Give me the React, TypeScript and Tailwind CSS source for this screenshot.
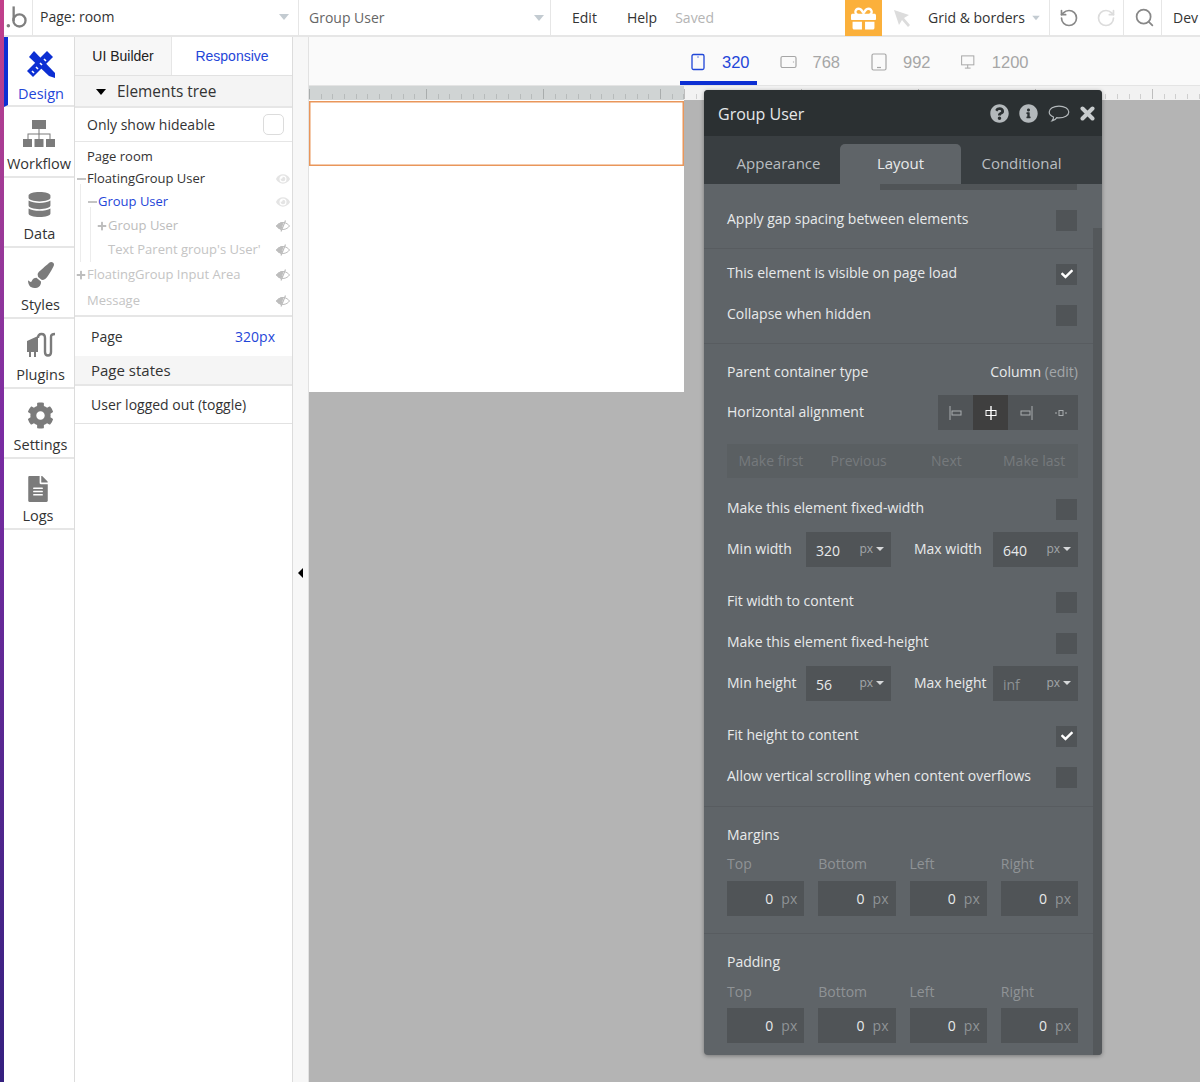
import { ReactNode } from "react";
import {
  FaCheck,
  FaCog,
  FaDatabase,
  FaEye,
  FaFileAlt,
  FaGift,
  FaInfoCircle,
  FaPaintBrush,
  FaPlus,
  FaQuestionCircle,
} from "react-icons/fa";
import { RotateCcw, RotateCw, Search } from "lucide-react";

const Caret = ({ className = "" }: { className?: string }) => (
  <span className={`block w-0 h-0 border-x-[5px] border-x-transparent border-t-[6px] border-t-[#c3cbd1] ${className}`} />
);

const Logo = () => (
  <svg width="29" height="34" viewBox="4 0 29 34" fill="none" stroke="#7f7f7f">
    <circle cx="8.5" cy="25" r="1.8" fill="#7f7f7f" stroke="none" />
    <path d="M14 5 V20" strokeWidth="2.4" />
    <circle cx="20" cy="19.5" r="6.3" strokeWidth="2.4" />
  </svg>
);

const DesignIcon = () => (
  <svg width="30" height="28" viewBox="0 0 30 28" fill="#0c2fd3">
    <path d="M3 7 L8 1 L29 23 L29 28 L23 26 Z" />
    <path d="M1 21 L21 1 L27 7 L7 27 Z" />
    <path d="M6 21 l2 2 M10 17 l2 2 M14 13 l2 2 M18 9 l2 2" stroke="#fff" strokeWidth="1.6" />
  </svg>
);

const WorkflowIcon = () => (
  <svg width="32" height="28" viewBox="0 0 32 28" fill="#7b7b7b">
    <rect x="9" y="0" width="14" height="9" />
    <rect x="0" y="19" width="9" height="8" />
    <rect x="11.5" y="19" width="9" height="8" />
    <rect x="23" y="19" width="9" height="8" />
    <path d="M15.5 9h1v4.5h11v5.5h-1v-4.5h-10v4.5h-1v-4.5h-10v4.5h-1v-5.5h11z" />
  </svg>
);

const PluginIcon = () => (
  <svg width="30" height="26" viewBox="0 0 30 26" fill="#7b7b7b">
    <path d="M1 9 L12 4 V20 H10 V25 H8 V20 H5 V25 H3 V20 H1 Z" />
    <path d="M12 6 q0 -4 3.5 -4 q3.5 0 3.5 4 V20 q0 3.5 3 3.5 q3 0 3 -3.5 V5 q0 -3 4 -3" fill="none" stroke="#7b7b7b" strokeWidth="2.4" />
  </svg>
);

const EyeOff = () => (
  <svg width="14" height="12" viewBox="0 0 14 12" fill="none" stroke="#bdbdbd" strokeWidth="1">
    <path d="M7 2.5 C10 2.5 12.5 4.5 13.5 6 C12.5 7.5 10 9.5 7 9.5 C4 9.5 1.5 7.5 0.5 6 C1.5 4.5 4 2.5 7 2.5 Z" />
    <path d="M7 2.5 C4 2.5 1.5 4.5 0.5 6 C1.5 7.5 3 8.7 5 9.2 Z" fill="#bdbdbd" />
    <path d="M9.5 0.5 L5 11.5" strokeWidth="1.2" />
  </svg>
);

const CommentIcon = () => (
  <svg width="22" height="17" viewBox="0 0 22 17" fill="none" stroke="#b4b9bc" strokeWidth="1.2">
    <path d="M11 1.2 C16.4 1.2 20.8 3.6 20.8 7 C20.8 10.4 16.4 12.8 11 12.8 C10.2 12.8 9.5 12.7 8.8 12.6 C7.8 14.4 6 15.6 4 15.8 C5 14.8 5.6 13.4 5.5 12 C2.9 11 1.2 9.2 1.2 7 C1.2 3.6 5.6 1.2 11 1.2 Z" />
  </svg>
);

const CloseIcon = () => (
  <svg width="15" height="15" viewBox="0 0 15 15" stroke="#c8ccce" strokeWidth="4" strokeLinecap="round">
    <path d="M2.5 2.5 L12.5 12.5 M12.5 2.5 L2.5 12.5" />
  </svg>
);

const AlignIcon = ({ kind }: { kind: number }) => (
  <svg width="18" height="16" viewBox="0 0 18 16" fill="none" stroke="currentColor" strokeWidth="1">
    {kind === 0 && (
      <>
        <path d="M3 1v14" />
        <rect x="5" y="6" width="9" height="4" />
      </>
    )}
    {kind === 1 && (
      <>
        <path d="M9 1v14" strokeWidth="1.4" />
        <rect x="4" y="5.5" width="10" height="5" />
      </>
    )}
    {kind === 2 && (
      <>
        <path d="M15 1v14" />
        <rect x="4" y="6" width="9" height="4" />
      </>
    )}
    {kind === 3 && (
      <>
        <rect x="7" y="5.5" width="4" height="5" />
        <path d="M3 8h2M13 8h2" />
      </>
    )}
  </svg>
);

const railItems: { label: string; icon: ReactNode; active?: boolean; shift?: string }[] = [
  { label: "Design", icon: <DesignIcon />, active: true },
  { label: "Workflow", icon: <WorkflowIcon /> },
  { label: "Data", icon: <FaDatabase size={25} color="#7b7b7b" />, shift: "pl-[1px]" },
  { label: "Styles", icon: <FaPaintBrush size={26} color="#7b7b7b" />, shift: "pl-[3px]" },
  { label: "Plugins", icon: <PluginIcon />, shift: "pl-[3px]" },
  { label: "Settings", icon: <FaCog size={27} color="#7b7b7b" />, shift: "pl-[3px]" },
  { label: "Logs", icon: <FaFileAlt size={26} color="#7b7b7b" className="mt-[6px]" />, shift: "pr-[2px]" },
];

function Rail() {
  return (
    <div className="w-[71px] shrink-0 flex flex-col border-r border-[#dcdcdc] bg-white">
      {railItems.map((item) => (
        <div
          key={item.label}
          className={`h-[70.4px] flex flex-col items-center justify-end border-b-2 border-[#e6e6e6] ${item.shift ?? ""} ${
            item.active ? "border-l-4 border-l-[#0c2fd3] text-[#1f46d8] pb-[1px]" : "text-[#333] pb-[2px]"
          }`}
        >
          <div className="h-[34px] flex items-center justify-center">{item.icon}</div>
          <div className="text-[14.5px] leading-[20px] mt-[3px]">{item.label}</div>
        </div>
      ))}
    </div>
  );
}

const TreeRow = ({
  label,
  indent,
  sign,
  color,
  eye,
  rowClass,
}: {
  label: string;
  indent: number;
  sign?: "minus" | "plus";
  color: string;
  eye?: "open" | "off";
  rowClass: string;
}) => (
  <div className={`flex items-center ${rowClass}`}>
    <div className="flex items-center shrink-0" style={{ paddingLeft: indent }}>
      <span className="w-[11px] flex justify-center pr-[1px]">
        {sign === "minus" && <span className="block w-[9px] h-[2px] bg-[#c4c4c4]" />}
        {sign === "plus" && <FaPlus size={10} color="#bdbdbd" />}
      </span>
      <span className={`text-[13px] whitespace-nowrap ${color}`}>{label}</span>
    </div>
    <span className="ml-auto mr-[2px] flex items-center">
      {eye === "open" && <FaEye size={14} color="#e4e4e4" />}
      {eye === "off" && <EyeOff />}
    </span>
  </div>
);

function TreePanel() {
  return (
    <div className="w-[218px] shrink-0 flex flex-col bg-white border-r border-[#dcdcdc]">
      <div className="h-[39px] flex border-b border-[#e2e2e2] font-['Liberation_Sans',sans-serif] text-[14px]">
        <div className="w-[97px] flex items-center justify-center bg-[#f7f7f7] border-r border-[#e6e6e6] text-[#222]">UI Builder</div>
        <div className="flex-1 flex items-center justify-center text-[#1f46d8]">Responsive</div>
      </div>
      <div className="h-[32px] flex items-center bg-[#f4f4f4] border-b-2 border-[#e6e6e6] pl-[21px] pt-[1px] text-[#333] text-[15.4px]">
        <span className="w-0 h-0 border-x-[5px] border-x-transparent border-t-[6px] border-t-black mr-[11px]" />
        Elements tree
      </div>
      <div className="h-[34px] flex items-center justify-between border-b border-[#e6e6e6] pl-[12px] pr-[8px] text-[14px] text-[#333]">
        <span>Only show hideable</span>
        <span className="w-[21px] h-[21px] rounded-[5px] border border-[#dcdcdc]" />
      </div>
      <div className="relative h-[175px] flex flex-col border-b-2 border-[#e6e6e6] pt-[3px]">
        <span className="absolute left-[5px] top-[42px] h-[78px] w-px bg-[#ececec]" />
        <span className="absolute left-[15px] top-[65px] h-[55px] w-px bg-[#ececec]" />
        <div className="h-[23px] flex items-center pl-[12px] text-[13px] text-[#333]">Page room</div>
        <TreeRow rowClass="h-[22px]" label="FloatingGroup User" indent={1} sign="minus" color="text-[#333]" eye="open" />
        <TreeRow rowClass="h-[24px]" label="Group User" indent={12} sign="minus" color="text-[#1f46d8]" eye="open" />
        <TreeRow rowClass="h-[24px]" label="Group User" indent={22} sign="plus" color="text-[#bcbcbc]" eye="off" />
        <TreeRow rowClass="h-[24px]" label="Text Parent group's User'" indent={22} color="text-[#c4c4c4]" eye="off" />
        <TreeRow rowClass="h-[26px]" label="FloatingGroup Input Area" indent={1} sign="plus" color="text-[#c4c4c4]" eye="off" />
        <TreeRow rowClass="h-[25px]" label="Message" indent={1} color="text-[#c4c4c4]" eye="off" />
      </div>
      <div className="h-[39px] flex items-center justify-between pl-[16px] pr-[17px] text-[14px] text-[#333]">
        Page
        <span className="text-[#1f46d8]">320px</span>
      </div>
      <div className="h-[30px] flex items-center bg-[#f5f5f5] border-b-2 border-[#e6e6e6] pl-[16px] pt-[1px] text-[15px] text-[#333]">Page states</div>
      <div className="h-[38px] flex items-center border-b border-[#e2e2e2] pl-[16px] text-[14px] text-[#333]">User logged out (toggle)</div>
    </div>
  );
}

const PhoneIcon = () => (
  <svg width="20" height="18" viewBox="0 0 20 18" fill="none" stroke="currentColor" strokeWidth="1.3">
    <rect x="4" y="1.5" width="12" height="15" rx="1.5" />
    <path d="M10 3.6v0.8" />
  </svg>
);

const TabletWideIcon = () => (
  <svg width="20" height="18" viewBox="0 0 20 18" fill="none" stroke="currentColor" strokeWidth="1.2">
    <rect x="2" y="3.5" width="15" height="11" rx="1.5" />
    <path d="M14.5 8.5v1" />
  </svg>
);

const TabletIcon = () => (
  <svg width="20" height="18" viewBox="0 0 20 18" fill="none" stroke="currentColor" strokeWidth="1.2">
    <rect x="3" y="1" width="14" height="16" rx="1.5" />
    <path d="M8 14.5h4" />
  </svg>
);

const MonitorIcon = () => (
  <svg width="20" height="18" viewBox="0 0 20 18" fill="none" stroke="currentColor" strokeWidth="1.2">
    <rect x="2" y="1.5" width="15" height="11" />
    <path d="M9.5 12.5v4M6 16.5h7" />
  </svg>
);

const breakpoints = [
  { value: "320", icon: <PhoneIcon />, tab: "gap-[14px] text-[#1f46d8] border-b-[4px] border-[#0c2fd3]" },
  { value: "768", icon: <TabletWideIcon />, tab: "gap-[14px] text-[#a6a6a6] pb-[4px]" },
  { value: "992", icon: <TabletIcon />, tab: "gap-[14px] text-[#a6a6a6] pb-[4px]" },
  { value: "1200", icon: <MonitorIcon />, tab: "gap-[16px] text-[#a6a6a6] pb-[4px]" },
];

function Canvas() {
  return (
    <div className="flex-1 flex flex-col min-w-0">
      <div className="h-[49px] shrink-0 flex items-stretch gap-[13.5px] bg-[#fafafa] border-b border-[#e4e4e4] pl-[371px] font-['Liberation_Sans',sans-serif] text-[16.5px]">
        {breakpoints.map((b) => (
          <div key={b.value} className={`w-[77px] pl-[8px] pt-[6px] flex items-center ${b.tab}`}>
            {b.icon}
            {b.value}
          </div>
        ))}
      </div>
      <div className="h-[14px] shrink-0 flex bg-[#f2f2f2]">
        <div className="w-[375px] bg-[#d0d4d4] bg-[image:repeating-linear-gradient(90deg,#a9adad_0,#a9adad_1px,transparent_1px,transparent_117px),repeating-linear-gradient(90deg,#b7bbbb_0,#b7bbbb_1px,transparent_1px,transparent_11.7px)] bg-[length:100%_10px,100%_5px] bg-[position:0_3px,0_8px] bg-no-repeat" />
        <div className="flex-1 bg-[image:repeating-linear-gradient(90deg,#bdbdbd_0,#bdbdbd_1px,transparent_1px,transparent_117px),repeating-linear-gradient(90deg,#cfcfcf_0,#cfcfcf_1px,transparent_1px,transparent_11.7px)] bg-[length:100%_10px,100%_5px] bg-[position:0_3px,0_8px] bg-no-repeat" />
      </div>
      <div className="flex-1 bg-[#b4b4b4]">
        <div className="w-[375px] h-[292px] bg-white pt-px">
          <div className="h-[65px] w-[375px] shadow-[inset_0_0_0_1.5px_#e9965a]" />
        </div>
      </div>
    </div>
  );
}

const Check = ({ on }: { on?: boolean }) => (
  <span className="w-[21px] h-[21px] bg-[#505457] flex items-center justify-center">
    {on && <FaCheck size={12} color="#fff" />}
  </span>
);

const CheckRow = ({ label, on, className = "" }: { label: string; on?: boolean; className?: string }) => (
  <div className={`h-[32px] flex items-center justify-between ${className}`}>
    <span className="text-[#e8eaeb] pb-[3px]">{label}</span>
    <Check on={on} />
  </div>
);

const SizeBox = ({ value, dim }: { value: string; dim?: boolean }) => (
  <div className={`w-[85px] h-[35px] bg-[#505457] flex items-center pl-[10px] pr-[7px] ${dim ? "text-[#8d9194]" : "text-[#e8eaeb]"}`}>
    <span className="pt-[1px]">{value}</span>
    <span className="ml-auto pb-[2px] text-[12px] text-[#a3a7aa]">px</span>
    <span className="ml-[3px] mb-[2px] w-0 h-0 border-x-[4px] border-x-transparent border-t-[4px] border-t-[#d6d8da]" />
  </div>
);

const SizeRow = ({ a, b, av, bv, dim, className = "" }: { a: string; b: string; av: string; bv: string; dim?: boolean; className?: string }) => (
  <div className={`h-[35px] flex items-center ${className}`}>
    <span className="w-[79px] pb-[2px] text-[#e8eaeb]">{a}</span>
    <SizeBox value={av} />
    <span className="ml-[23px] w-[79px] pb-[2px] text-[#e8eaeb]">{b}</span>
    <SizeBox value={bv} dim={dim} />
  </div>
);

const BoxGroup = ({ title, labelGap }: { title: string; labelGap: string }) => (
  <div>
    <div className="h-[20px] leading-[20px] text-[#e8eaeb]">{title}</div>
    <div className="grid grid-cols-4 gap-x-[14px]">
      {["Top", "Bottom", "Left", "Right"].map((side) => (
        <div key={side} className="flex flex-col">
          <div className={`h-[20px] leading-[20px] text-[#8f9396] ${labelGap}`}>{side}</div>
          <div className="h-[35px] mt-auto bg-[#505457] flex items-center justify-end pr-[7px] gap-[8px]">
            <span className="text-[#e8eaeb]">0</span>
            <span className="text-[#8f9396]">px</span>
          </div>
        </div>
      ))}
    </div>
  </div>
);

function PropertyPanel() {
  return (
    <div className="absolute left-[704px] top-[90px] w-[398px] h-[965px] rounded-[4px] overflow-hidden bg-[#5f6468] shadow-[0_1px_4px_rgba(0,0,0,0.35)] flex flex-col text-[14px]">
      <div className="h-[46px] shrink-0 bg-[#2b3032] flex items-center pl-[14px] pr-[7px] pt-[1px] text-[#e6e8e9] text-[16px]">
        Group User
        <div className="ml-auto flex items-center gap-[10px] text-[#b4b9bc]">
          <FaQuestionCircle size={19} />
          <FaInfoCircle size={19} />
          <CommentIcon />
          <CloseIcon />
        </div>
      </div>
      <div className="h-[48px] shrink-0 bg-[#393e41] flex items-end text-[15px] text-[#b9bdc0]">
        <div className="w-[136px] h-[40px] flex items-center justify-center pl-[13px] pb-[2px]">Appearance</div>
        <div className="w-[121px] h-[40px] rounded-t-[5px] bg-[#5f6468] flex items-center justify-center pb-[2px] text-[#e8eaeb]">Layout</div>
        <div className="flex-1 h-[40px] flex items-center justify-center pr-[20px] pb-[2px]">Conditional</div>
      </div>
      <div className="relative flex-1 flex flex-col">
        <span className="absolute left-[176px] top-0 w-[197px] h-[6px] bg-[#505457]" />
        <span className="absolute right-0 top-[44px] bottom-0 w-[9px] bg-[#54585b]" />

        <div className="h-[65px] shrink-0 pt-[20px] pl-[23px] pr-[25px] border-b border-[#585c60]">
          <CheckRow label="Apply gap spacing between elements" />
        </div>
        <div className="h-[95px] shrink-0 pt-[9px] pl-[23px] pr-[25px] border-b border-[#585c60]">
          <CheckRow label="This element is visible on page load" on />
          <CheckRow label="Collapse when hidden" className="mt-[9px]" />
        </div>
        <div className="h-[463px] shrink-0 pt-[14px] pl-[23px] pr-[24px] border-b border-[#585c60]">
          <div className="h-[28px] flex items-center justify-between pb-[2px] text-[#e8eaeb]">
            Parent container type
            <span>
              Column <span className="text-[#a3a7aa]">(edit)</span>
            </span>
          </div>
          <div className="h-[35px] mt-[9px] flex items-center justify-between text-[#e8eaeb]">
            <span className="pb-[2px]">Horizontal alignment</span>
            <div className="flex bg-[#505457] text-[#a9adb0]">
              {[0, 1, 2, 3].map((kind) => (
                <span key={kind} className={`w-[35px] h-[35px] flex items-center justify-center ${kind === 1 ? "bg-[#3f3f3f] text-white" : ""}`}>
                  <AlignIcon kind={kind} />
                </span>
              ))}
            </div>
          </div>
          <div className="h-[34px] mt-[14px] pb-[2px] bg-[#5a5f62] grid grid-cols-4 items-center text-center text-[#767a7d]">
            <span>Make first</span>
            <span>Previous</span>
            <span>Next</span>
            <span>Make last</span>
          </div>
          <CheckRow label="Make this element fixed-width" className="mt-[15px] pr-px" />
          <SizeRow a="Min width" b="Max width" av="320" bv="640" className="mt-[7px]" />
          <CheckRow label="Fit width to content" className="mt-[19px] pr-px" />
          <CheckRow label="Make this element fixed-height" className="mt-[9px] pr-px" />
          <SizeRow a="Min height" b="Max height" av="56" bv="inf" dim className="mt-[7px]" />
          <CheckRow label="Fit height to content" on className="mt-[19px] pr-px" />
          <CheckRow label="Allow vertical scrolling when content overflows" className="mt-[9px] pr-px" />
        </div>
        <div className="h-[127px] shrink-0 pt-[18px] pl-[23px] pr-[24px] border-b border-[#585c60]">
          <BoxGroup title="Margins" labelGap="mt-[9px] mb-[7px]" />
        </div>
        <div className="flex-1 pt-[18px] pl-[23px] pr-[24px]">
          <BoxGroup title="Padding" labelGap="mt-[10px] mb-[6px]" />
        </div>
      </div>
    </div>
  );
}

function TopBar() {
  return (
    <div className="h-[37px] shrink-0 flex items-stretch bg-white border-b-2 border-[#e6e6e6] text-[14px] text-[#333]">
      <div className="w-[29px] flex items-center justify-center border-r border-[#e6e6e6]">
        <Logo />
      </div>
      <div className="w-[266px] flex items-center justify-between pl-[7px] pr-[9px] pb-[2px] border-r border-[#e6e6e6]">
        Page: room
        <Caret />
      </div>
      <div className="w-[252px] flex items-center justify-between pl-[10px] pr-[6px] border-r border-[#e6e6e6] text-[#666]">
        Group User
        <Caret />
      </div>
      <div className="w-[294px] flex items-center pl-[21px] pb-[1px]">
        Edit
        <span className="ml-[30px]">Help</span>
        <span className="ml-[18px] text-[#b4b4b4]">Saved</span>
      </div>
      <div className="w-[37px] h-[36px] bg-[#fbb03b] flex items-center justify-center">
        <FaGift size={25} color="#fff" />
      </div>
      <div className="w-[168px] flex items-center pl-[11px] border-r border-[#e6e6e6]">
        <svg width="18" height="18" viewBox="0 0 18 18" fill="#dcdcdc">
          <path d="M1 1 L16 6 L11 9 L17 16 L15 18 L9 11 L6 16 Z" />
        </svg>
        <span className="ml-[17px]">Grid &amp; borders</span>
        <Caret className="ml-[6px] scale-75" />
      </div>
      <div className="w-[74px] flex items-center pl-[9px] gap-[17px] border-r border-[#e6e6e6]">
        <RotateCcw size={20} color="#888" />
        <RotateCw size={20} color="#dcdcdc" />
      </div>
      <div className="w-[38px] flex items-center justify-center pl-[3px] border-r border-[#e6e6e6]">
        <Search size={21} color="#888" />
      </div>
      <div className="pl-[11px] flex items-center whitespace-nowrap">Dev</div>
    </div>
  );
}

export default function App() {
  return (
    <div className="relative w-[1200px] h-[1082px] overflow-hidden bg-white flex font-['Open_Sans',sans-serif]">
      <div className="w-[4px] shrink-0 bg-gradient-to-b from-[#c2408a] via-[#7a2ba2] via-40% to-[#35207f]" />
      <div className="flex-1 flex flex-col min-w-0">
        <TopBar />
        <div className="flex-1 flex min-h-0">
          <Rail />
          <TreePanel />
          <div className="w-[16px] shrink-0 bg-[#f7f7f7] border-r border-[#e2e2e2] flex items-center justify-center">
            <span className="w-0 h-0 border-y-[5px] border-y-transparent border-r-[5px] border-r-black mt-[26px]" />
          </div>
          <Canvas />
        </div>
      </div>
      <PropertyPanel />
    </div>
  );
}
